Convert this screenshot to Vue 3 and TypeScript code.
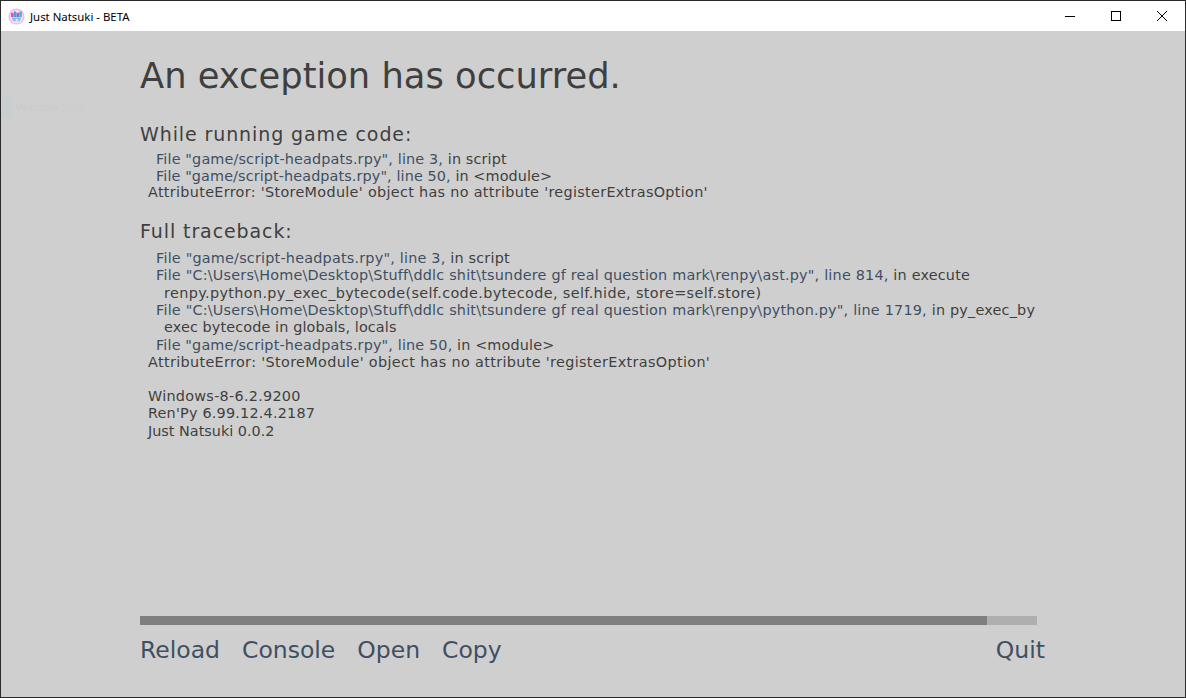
<script setup lang="ts">
interface Line { text: string; kind: string; tail?: string }
const first: Line[] = [
  { kind: 'file mid', text: 'File "game/script-headpats.rpy", line 3,', tail: ' in script' },
  { kind: 'file short', text: 'File "game/script-headpats.rpy", line 50,', tail: ' in <module>' },
  { kind: 'err', text: "AttributeError: 'StoreModule' object has no attribute 'registerExtrasOption'" },
]
const second: Line[] = [
  { kind: 'file', text: 'File "game/script-headpats.rpy", line 3,', tail: ' in script' },
  { kind: 'file', text: 'File "C:\\Users\\Home\\Desktop\\Stuff\\ddlc shit\\tsundere gf real question mark\\renpy\\ast.py", line 814,', tail: ' in execute' },
  { kind: 'code wide', text: 'renpy.python.py_exec_bytecode(self.code.bytecode, self.hide, store=self.store)' },
  { kind: 'file', text: 'File "C:\\Users\\Home\\Desktop\\Stuff\\ddlc shit\\tsundere gf real question mark\\renpy\\python.py", line 1719,', tail: ' in py_exec_by' },
  { kind: 'code', text: 'exec bytecode in globals, locals' },
  { kind: 'file mid', text: 'File "game/script-headpats.rpy", line 50,', tail: ' in <module>' },
  { kind: 'err long', text: "AttributeError: 'StoreModule' object has no attribute 'registerExtrasOption'" },
]
const info: Line[] = [
  { kind: 'plain os', text: 'Windows-8-6.2.9200' },
  { kind: 'plain rp', text: "Ren'Py 6.99.12.4.2187" },
  { kind: 'plain', text: 'Just Natsuki 0.0.2' },
]
const actions = ['Reload', 'Console', 'Open', 'Copy']
</script>

<template>
  <div class="window">
    <header class="titlebar">
      <svg class="appicon" viewBox="0 0 16 16" width="17" height="17">
        <circle cx="8" cy="8" r="7.6" fill="#fbb8e0" />
        <circle cx="8" cy="8" r="6.2" fill="#fde6f3" />
        <rect x="2.8" y="4.5" width="2.6" height="4" fill="#e8509f" />
        <rect x="5.5" y="3.2" width="2.3" height="5.3" fill="#4f9fe2" />
        <rect x="8" y="4.5" width="2.4" height="4" fill="#9a63d2" />
        <rect x="10.5" y="3.2" width="2.7" height="5.3" fill="#46c2c8" />
        <path d="M3.2 9h9.6l-1.8 3.4H5z" fill="#74c4ee" />
        <path d="M7 10.5h3l-2 2z" fill="#fff" />
      </svg>
      <span class="wintitle">Just Natsuki - BETA</span>
      <div class="controls">
        <svg viewBox="0 0 46 30" width="46" height="30"><path d="M18 15.5h10" stroke="#000" fill="none" /></svg>
        <svg viewBox="0 0 46 30" width="46" height="30"><rect x="18.5" y="10.5" width="9" height="9" stroke="#000" fill="none" /></svg>
        <svg viewBox="0 0 46 30" width="46" height="30"><path d="M18 10l10 10M28 10l-10 10" stroke="#000" fill="none" /></svg>
      </div>
    </header>

    <main class="screen">
      <div class="ghost-box"></div>
      <div class="ghost">Window Snip</div>
      <h1 class="title">An exception has occurred.</h1>

      <h2 class="section first">While running game code:</h2>
      <div class="block tight">
        <div v-for="(l, i) in first" :key="i" :class="['line', l.kind]">{{ l.text }}<span class="dark">{{ l.tail }}</span></div>
      </div>

      <h2 class="section second">Full traceback:</h2>
      <div class="block lower">
        <div v-for="(l, i) in second" :key="i" :class="['line', l.kind]">{{ l.text }}<span class="dark">{{ l.tail }}</span></div>
      </div>

      <div class="block info">
        <div v-for="l in info" :key="l.text" :class="['line', l.kind]">{{ l.text }}</div>
      </div>

      <div class="spacer"></div>

      <div class="progress"><div class="fill"></div></div>
      <nav class="actions">
        <span v-for="a in actions" :key="a" class="action">{{ a }}</span>
        <span class="action quit">Quit</span>
      </nav>
    </main>
  </div>
</template>

<style>
html, body { margin: 0; padding: 0; background: #cfcfcf; }
</style>

<style scoped>
.window {
  width: 1186px;
  height: 698px;
  box-sizing: border-box;
  border: 1px solid #2a2a2a;
  display: flex;
  flex-direction: column;
  overflow: hidden;
  font-family: "DejaVu Sans", sans-serif;
  background: #cfcfcf;
}
.titlebar {
  height: 30px;
  flex: none;
  background: #fff;
  display: flex;
  align-items: center;
  padding-left: 7px;
}
.appicon { flex: none; }
.wintitle {
  margin-left: 5px;
  font: 11.4px "Noto Sans", "Open Sans", sans-serif;
  color: #000;
}
.controls { margin-left: auto; display: flex; }
.controls svg { display: block; }
.screen {
  flex: 1;
  position: relative;
  display: flex;
  flex-direction: column;
  padding: 0 148px 0 139px;
  min-height: 0;
}
.ghost-box {
  position: absolute;
  left: 1px;
  top: 65px;
  width: 10px;
  height: 22px;
  background: #c9cfcf;
}
.ghost {
  position: absolute;
  left: 15px;
  top: 67px;
  font: 11.4px "Noto Sans", sans-serif;
  line-height: 17px;
  color: #c8ccd0;
}
.title {
  margin: 20px 0 0;
  font-weight: 400;
  font-size: 35.3px;
  line-height: 50px;
  color: #3f3f3f;
}
.section {
  font-weight: 400;
  font-size: 19px;
  line-height: 24px;
  color: #3f3f3f;
  letter-spacing: 0.9px;
}
.first { margin: 21px 0 0; }
.second { margin: 18px 0 0; }
.block { margin-top: 5px; width: 897px; overflow: hidden; }
.lower { margin-top: 7px; }
.line {
  font-size: 14.4px;
  line-height: 17.3px;
  height: 17.3px;
  white-space: nowrap;
  color: #3f3f3f;
}
.tight .line { line-height: 16.7px; height: 16.7px; }
.file { padding-left: 16px; color: #3f4f63; letter-spacing: 0.2px; }
.short { letter-spacing: 0.1px; }
.mid { letter-spacing: 0.14px; }
.code { padding-left: 24px; letter-spacing: 0.12px; }
.wide { letter-spacing: 0.36px; }
.err { padding-left: 8px; letter-spacing: 0.31px; }
.long { letter-spacing: 0.34px; }
.plain { padding-left: 8px; }
.os { letter-spacing: 0.27px; }
.rp { letter-spacing: 0.2px; }
.dark { color: #3f3f3f; }
.info { margin-top: 17px; }
.spacer { flex: 1; }
.progress {
  width: 897px;
  height: 9px;
  background: #afafaf;
}
.fill { width: 847px; height: 100%; background: #7f7f7f; }
.actions {
  display: flex;
  gap: 22px;
  margin-top: 8px;
  margin-bottom: 30px;
  width: 905px;
}
.action {
  font-size: 23.5px;
  line-height: 34px;
  color: #3f4f63;
}
.quit { margin-left: auto; }
</style>
